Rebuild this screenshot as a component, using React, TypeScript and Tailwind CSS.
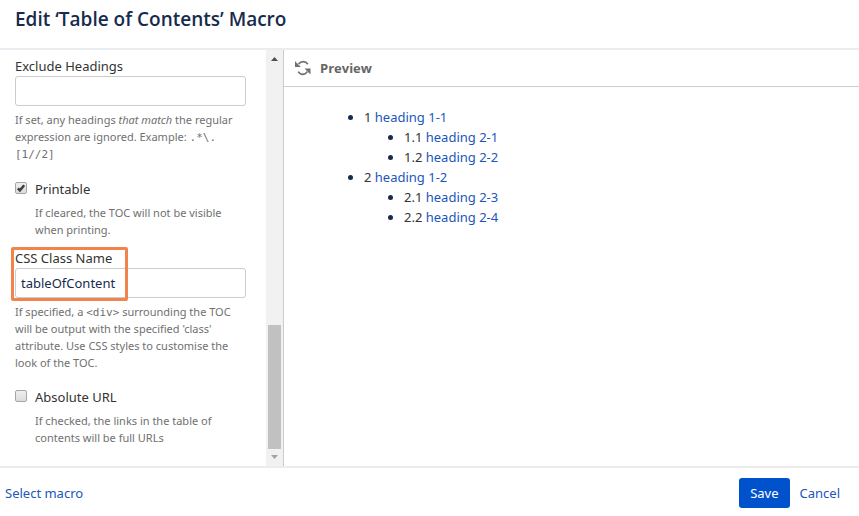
import { useState } from "react";
import type { ReactNode } from "react";

function Help({ children }: { children: ReactNode }) {
  return <p className="pt-[5px] pb-px text-[11px] leading-[17px] text-[#707070]">{children}</p>;
}

function Code({ children }: { children: ReactNode }) {
  return <code className="font-['DejaVu_Sans_Mono',monospace] text-[11px] leading-none">{children}</code>;
}

function TextField({ id, label, value, help }: { id: string; label: string; value: string; help: ReactNode }) {
  const [text, setText] = useState(value);
  return (
    <div>
      <label htmlFor={id} className="block leading-5 text-[#333333]">
        {label}
      </label>
      <input
        id={id}
        type="text"
        value={text}
        onChange={(e) => setText(e.target.value)}
        className="block h-[30px] w-full rounded-[3px] border border-[#cccccc] bg-white px-[5px] text-[#172b4d] outline-none"
      />
      <Help>{help}</Help>
    </div>
  );
}

function CheckField({ id, label, checked, help }: { id: string; label: string; checked: boolean; help: ReactNode }) {
  const [on, setOn] = useState(checked);
  return (
    <div className="flex gap-2">
      <span className="relative mt-[3px] h-3 w-3 shrink-0">
        <input
          id={id}
          type="checkbox"
          checked={on}
          onChange={(e) => setOn(e.target.checked)}
          className="block h-3 w-3 appearance-none rounded-[2px] border border-[#a6a6a6] bg-linear-to-b from-[#efefef] to-[#dcdcdc]"
        />
        {on && (
          <svg viewBox="0 0 12 12" className="pointer-events-none absolute inset-0 h-3 w-3" aria-hidden="true">
            <path d="M2.8 6.3 4.9 8.4 9.2 3.2" fill="none" stroke="#404040" strokeWidth="2.5" />
          </svg>
        )}
      </span>
      <div>
        <label htmlFor={id} className="block leading-5 text-[#333333]">
          {label}
        </label>
        <Help>{help}</Help>
      </div>
    </div>
  );
}

function Scrollbar() {
  return (
    <div className="flex w-[17px] shrink-0 flex-col items-center bg-[#f1f1f1]" aria-hidden="true">
      <svg viewBox="0 0 17 17" className="h-[17px] w-[17px] shrink-0">
        <path d="M5 11h7L8.500 7z" fill="#505050" />
      </svg>
      <div className="grow" />
      <div className="h-[124px] w-[13px] bg-[#c1c1c1]" />
      <svg viewBox="0 0 17 17" className="h-[17px] w-[17px] shrink-0">
        <path d="M5 6h7L8.500 10z" fill="#a3a3a3" />
      </svg>
    </div>
  );
}

const sections = [
  { n: "1", title: "heading 1-1", items: [["1.1", "heading 2-1"], ["1.2", "heading 2-2"]] },
  { n: "2", title: "heading 1-2", items: [["2.1", "heading 2-3"], ["2.2", "heading 2-4"]] },
];

export default function App() {
  return (
    <div className="flex h-screen flex-col bg-white font-['Noto_Sans','Open_Sans',sans-serif] text-[13px] leading-5 text-[#172b4d]">
      <header className="h-[50px] shrink-0 border-b-2 border-[#ebecf0] px-[15px] pt-[7px]">
        <h1 className="font-['Open_Sans','Noto_Sans',sans-serif] text-[19px] leading-6 font-semibold">
          Edit ‘Table of Contents’ Macro
        </h1>
      </header>

      <div className="flex min-h-0 grow">
        <aside className="flex w-[284px] shrink-0 border-r border-[#cccccc]">
          <form className="min-w-0 grow overflow-hidden pt-1.5 pr-5 pl-[15px]">
            <TextField
              id="exclude"
              label="Exclude Headings"
              value=""
              help={
                <>
                  If set, any headings <em>that match</em> the regular expression are ignored. Example:{" "}
                  <Code>
                    .*\.
                    <wbr />
                    [1//2]
                  </Code>
                </>
              }
            />
            <div className="mt-4">
              <CheckField
                id="printable"
                label="Printable"
                checked
                help="If cleared, the TOC will not be visible when printing."
              />
            </div>
            <div className="relative mt-[9px]">
              <TextField
                id="css-class"
                label="CSS Class Name"
                value="tableOfContent"
                help={
                  <>
                    If specified, a <Code>&lt;div&gt;</Code> surrounding the TOC will be output with the specified
                    'class' attribute. Use CSS styles to customise the look of the TOC.
                  </>
                }
              />
              <div className="pointer-events-none absolute -top-px -left-1 h-[54px] w-[117px] rounded-[2px] border-3 border-[#f0844c]" />
            </div>
            <div className="mt-[15px]">
              <CheckField
                id="absolute-url"
                label="Absolute URL"
                checked={false}
                help="If checked, the links in the table of contents will be full URLs"
              />
            </div>
          </form>
          <Scrollbar />
        </aside>

        <main className="min-w-0 grow">
          <div className="flex h-[37px] items-center gap-2 border-b border-[#cccccc] pl-2.5">
            <button type="button" aria-label="Refresh preview" className="block">
              <svg viewBox="0 0 18 18" className="block h-[18px] w-[18px]" aria-hidden="true">
                <g fill="none" stroke="#707070" strokeWidth="1.7">
                  <path d="M4.500 5C7 1.800 11.500 1.600 13.800 5.200" />
                  <path d="M13.300 12.600C11 16.200 6.500 16.200 4.200 12.600" />
                </g>
                <path d="M1 2V8H6.800L4.900 6.100 3 4.200z" fill="#707070" />
                <path d="M16.500 15.500V9.500H10.500z" fill="#707070" />
              </svg>
            </button>
            <h2 className="font-['Open_Sans','Noto_Sans',sans-serif] font-bold text-[#666666]">Preview</h2>
          </div>
          <ul className="list-disc pt-5 pl-20 text-[#333333] marker:text-[#172b4d]">
            {sections.map((s) => (
              <li key={s.n}>
                {s.n}{" "}
                <a href="#" className="text-[#1c56ba]">
                  {s.title}
                </a>
                <ul className="list-disc pl-10">
                  {s.items.map(([n, title]) => (
                    <li key={n}>
                      {n}{" "}
                      <a href="#" className="text-[#1c56ba]">
                        {title}
                      </a>
                    </li>
                  ))}
                </ul>
              </li>
            ))}
          </ul>
        </main>
      </div>

      <footer className="flex h-[50px] shrink-0 items-center border-t-2 border-[#ebecf0] pt-0.5 pr-[19px] pl-[5px]">
        <a href="#" className="text-[#1c56ba]">
          Select macro
        </a>
        <button type="button" className="ml-auto h-[30px] rounded-[3px] bg-[#0052cc] px-[11px] text-white">
          Save
        </button>
        <button type="button" className="ml-2.5 text-[#1c56ba]">
          Cancel
        </button>
      </footer>
    </div>
  );
}
